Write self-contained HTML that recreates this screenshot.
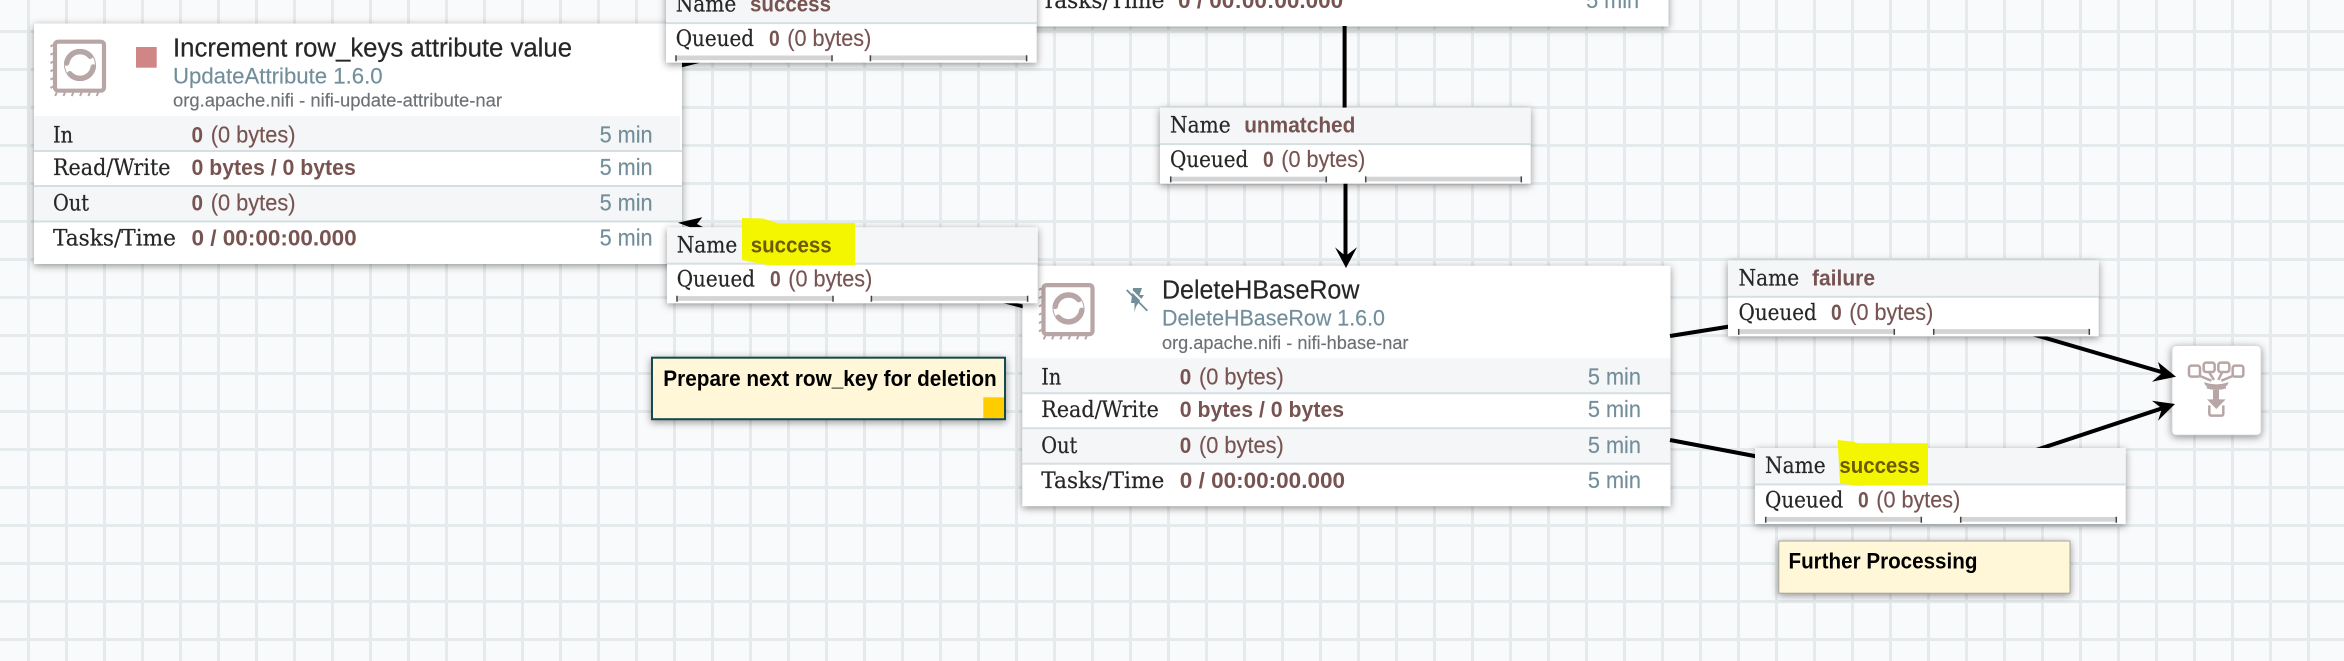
<!DOCTYPE html>
<html lang="en">
<head>
<meta charset="utf-8">
<title>NiFi flow</title>
<style>
html,body{margin:0;padding:0;background:#f9fafb;width:2344px;height:661px;overflow:hidden}
svg{display:block}
.sh{filter:drop-shadow(0 2px 4px rgba(0,0,0,.42))}
text{white-space:pre}
.t{font:25.5px "Liberation Sans",sans-serif;fill:#262626;stroke:#262626;stroke-width:.2}
.s{font:22px "Liberation Sans",sans-serif;fill:#728e9b;stroke:#728e9b;stroke-width:.15}
.b{font:18.5px "Liberation Sans",sans-serif;fill:#6b7175;stroke:#6b7175;stroke-width:.15}
.l{font:22px "DejaVu Serif","Liberation Serif",serif;fill:#262626;stroke:#262626;stroke-width:.2}
.v{font:bold 22.5px "Liberation Sans",sans-serif;fill:#775351}
.n{font:23px "Liberation Sans",sans-serif;fill:#775351;stroke:#775351;stroke-width:.15}
.m{font:23px "Liberation Sans",sans-serif;fill:#728e9b;stroke:#728e9b;stroke-width:.15}
.o{font:bold 22px "Liberation Sans",sans-serif;fill:#000}
.hl{font:bold 22.5px "Liberation Sans",sans-serif;fill:#6e5a00}
.ic{fill:none;stroke:#b8a5a5}
</style>
</head>
<body>
<svg xmlns="http://www.w3.org/2000/svg" width="2344" height="661" viewBox="0 0 2344 661">
<defs>
<pattern id="g" x="27" y="30" width="38" height="38" patternUnits="userSpaceOnUse">
<rect width="38" height="38" fill="#f9fafb"/>
<rect width="3" height="38" fill="#e5ebed"/>
<rect width="38" height="3" fill="#e5ebed"/>
</pattern>
</defs>
<rect width="2344" height="661" fill="url(#g)"/>

<!-- top processor (cropped) -->
<g transform="translate(1020.5,-214)">
<rect class="sh" width="648" height="240.5" fill="#fff"/>
<text class="l" x="21" y="222.2" textLength="123" lengthAdjust="spacingAndGlyphs">Tasks/Time</text>
<text class="v" x="157.5" y="222.2" textLength="165.2" lengthAdjust="spacingAndGlyphs">0 / 00:00:00.000</text>
<text class="m" x="565.6" y="222.2" textLength="53" lengthAdjust="spacingAndGlyphs">5 min</text>
</g>

<!-- processor 1 -->
<g transform="translate(34,23.5)">
<rect class="sh" width="648" height="240.5" fill="#fff"/>
<rect y="92.5" width="646" height="34" fill="#f4f6f7"/>
<rect y="126.5" width="648" height="2" fill="#d5dfe2"/>
<rect y="163.5" width="648" height="33.5" fill="#f4f6f7"/>
<rect y="161.5" width="648" height="2" fill="#d5dfe2"/>
<rect y="197" width="648" height="2" fill="#d5dfe2"/>
<rect class="ic" x="21" y="18.2" width="49" height="49" rx="3" stroke-width="4.2"/>
<path class="ic" stroke-width="2" d="M19 21.5l-2.5 1.5M19 29.8l-2.5 1.5M19 38.1l-2.5 1.5M19 46.4l-2.5 1.5M19 54.7l-2.5 1.5M19 63l-2.5 1.5M22.7 69l-1.5 3.5M31 69l-1.5 3.5M39.3 69l-1.5 3.5M47.6 69l-1.5 3.5M55.9 69l-1.5 3.5M64.2 69l-1.5 3.5"/>
<circle class="ic" cx="46" cy="41.5" r="15.5" stroke-width="1" stroke="#cdbfbf"/>
<path class="ic" stroke-width="5.5" stroke-linecap="round" d="M32.7 39.5A13.5 13.5 0 0 1 56.2 32.7M35.8 50.3A13.5 13.5 0 0 0 59.3 43.5"/>
<rect x="102" y="23.5" width="20.7" height="20.7" fill="#d18686"/>
<text class="t" x="139" y="33.2" textLength="399" lengthAdjust="spacingAndGlyphs">Increment row_keys attribute value</text>
<text class="s" x="139" y="59.8" textLength="209.6" lengthAdjust="spacingAndGlyphs">UpdateAttribute 1.6.0</text>
<text class="b" x="139" y="83.2" textLength="329" lengthAdjust="spacingAndGlyphs">org.apache.nifi - nifi-update-attribute-nar</text>
<text class="l" x="19" y="118.8" textLength="20" lengthAdjust="spacingAndGlyphs">In</text>
<text class="v" x="157.5" y="118.8" textLength="11.5" lengthAdjust="spacingAndGlyphs">0</text>
<text class="n" x="176.7" y="118.8" textLength="84.8" lengthAdjust="spacingAndGlyphs">(0 bytes)</text>
<text class="m" x="565.6" y="118.8" textLength="53" lengthAdjust="spacingAndGlyphs">5 min</text>
<text class="l" x="19" y="151.5" textLength="117.5" lengthAdjust="spacingAndGlyphs">Read/Write</text>
<text class="v" x="157.5" y="151.5" textLength="164.3" lengthAdjust="spacingAndGlyphs">0 bytes / 0 bytes</text>
<text class="m" x="565.6" y="151.5" textLength="53" lengthAdjust="spacingAndGlyphs">5 min</text>
<text class="l" x="19" y="187.2" textLength="36" lengthAdjust="spacingAndGlyphs">Out</text>
<text class="v" x="157.5" y="187.2" textLength="11.5" lengthAdjust="spacingAndGlyphs">0</text>
<text class="n" x="176.7" y="187.2" textLength="84.8" lengthAdjust="spacingAndGlyphs">(0 bytes)</text>
<text class="m" x="565.6" y="187.2" textLength="53" lengthAdjust="spacingAndGlyphs">5 min</text>
<text class="l" x="19" y="222.2" textLength="123" lengthAdjust="spacingAndGlyphs">Tasks/Time</text>
<text class="v" x="157.5" y="222.2" textLength="165.2" lengthAdjust="spacingAndGlyphs">0 / 00:00:00.000</text>
<text class="m" x="565.6" y="222.2" textLength="53" lengthAdjust="spacingAndGlyphs">5 min</text>
</g>

<!-- processor 2 -->
<g transform="translate(1022.3,265.7)">
<rect class="sh" width="648.2" height="240.5" fill="#fff"/>
<rect y="92.5" width="648" height="34" fill="#f4f6f7"/>
<rect y="126.5" width="648" height="2" fill="#d5dfe2"/>
<rect y="163.5" width="648" height="33.5" fill="#f4f6f7"/>
<rect y="161.5" width="648" height="2" fill="#d5dfe2"/>
<rect y="197" width="648" height="2" fill="#d5dfe2"/>
<rect class="ic" x="21.2" y="19.4" width="49" height="49" rx="3" stroke-width="4.2"/>
<path class="ic" stroke-width="2" d="M19.2 22.7l-2.5 1.5M19.2 31l-2.5 1.5M19.2 39.3l-2.5 1.5M19.2 47.6l-2.5 1.5M19.2 55.9l-2.5 1.5M19.2 64.2l-2.5 1.5M22.9 70.2l-1.5 3.5M31.2 70.2l-1.5 3.5M39.5 70.2l-1.5 3.5M47.8 70.2l-1.5 3.5M56.1 70.2l-1.5 3.5M64.4 70.2l-1.5 3.5"/>
<circle class="ic" cx="46.2" cy="42.7" r="15.5" stroke-width="1" stroke="#cdbfbf"/>
<path class="ic" stroke-width="5.5" stroke-linecap="round" d="M32.9 40.7A13.5 13.5 0 0 1 56.4 33.9M36 51.5A13.5 13.5 0 0 0 59.5 44.7"/>
<text class="t" x="139.7" y="33" textLength="197.4" lengthAdjust="spacingAndGlyphs">DeleteHBaseRow</text>
<text class="s" x="139.7" y="59.8" textLength="223" lengthAdjust="spacingAndGlyphs">DeleteHBaseRow 1.6.0</text>
<text class="b" x="139.7" y="83.2" textLength="246.5" lengthAdjust="spacingAndGlyphs">org.apache.nifi - nifi-hbase-nar</text>
<text class="l" x="19" y="118.8" textLength="20" lengthAdjust="spacingAndGlyphs">In</text>
<text class="v" x="157.5" y="118.8" textLength="11.5" lengthAdjust="spacingAndGlyphs">0</text>
<text class="n" x="176.7" y="118.8" textLength="84.8" lengthAdjust="spacingAndGlyphs">(0 bytes)</text>
<text class="m" x="565.6" y="118.8" textLength="53" lengthAdjust="spacingAndGlyphs">5 min</text>
<text class="l" x="19" y="151.5" textLength="117.5" lengthAdjust="spacingAndGlyphs">Read/Write</text>
<text class="v" x="157.5" y="151.5" textLength="164.3" lengthAdjust="spacingAndGlyphs">0 bytes / 0 bytes</text>
<text class="m" x="565.6" y="151.5" textLength="53" lengthAdjust="spacingAndGlyphs">5 min</text>
<text class="l" x="19" y="187.2" textLength="36" lengthAdjust="spacingAndGlyphs">Out</text>
<text class="v" x="157.5" y="187.2" textLength="11.5" lengthAdjust="spacingAndGlyphs">0</text>
<text class="n" x="176.7" y="187.2" textLength="84.8" lengthAdjust="spacingAndGlyphs">(0 bytes)</text>
<text class="m" x="565.6" y="187.2" textLength="53" lengthAdjust="spacingAndGlyphs">5 min</text>
<text class="l" x="19" y="222.2" textLength="123" lengthAdjust="spacingAndGlyphs">Tasks/Time</text>
<text class="v" x="157.5" y="222.2" textLength="165.2" lengthAdjust="spacingAndGlyphs">0 / 00:00:00.000</text>
<text class="m" x="565.6" y="222.2" textLength="53" lengthAdjust="spacingAndGlyphs">5 min</text>
</g>
<!-- disabled bolt icon -->
<path d="M1133 288h9l-2.5 7h4.5l-8 11.500-1.500 5.500 0-9-3.500 0z" fill="#728e9b"/>
<path d="M1129.5 288.500L1149.500 308.500" stroke="#fff" stroke-width="2"/>
<path d="M1126.7 290L1147.3 310.7" stroke="#728e9b" stroke-width="1.8"/>

<!-- funnel -->
<rect class="sh" x="2172" y="345.5" width="89" height="89.5" rx="4" fill="#fff" stroke="#d4d4d4" stroke-width=".8"/>
<g transform="translate(2150,330) scale(.3333)">
<g fill="none" stroke="#b8a5a5" stroke-width="7.5">
<rect x="117" y="107" width="33" height="33" rx="7"/>
<rect x="161" y="98" width="33" height="28" rx="7"/>
<rect x="205" y="98" width="33" height="28" rx="7"/>
<rect x="248" y="107" width="32" height="33" rx="7"/>
<path d="M150 138L184 152M177 126L192 150M217 126L205 150M248 138L214 152"/>
<path d="M178 226v24q0 7 7 7h28q7 0 7-7v-24"/>
</g>
<path d="M162 156q37 14 74 0l-4 10q-33 14-66 0z" fill="#b8a5a5"/>
<path d="M170 168q29 10 58 0v7q-29 10-58 0z" fill="#b8a5a5"/>
<path d="M189 180h18v28h20l-28 29-28-29h18z" fill="#b8a5a5"/>
</g>

<!-- connections -->
<g fill="none" stroke="#000" stroke-width="4">
<path d="M1344.6 26V108"/>
<path d="M1345.5 183V258"/>
<path d="M1670 336L1735 325.600"/>
<path d="M2025 332L2165 373"/>
<path d="M1670 440L1765 458"/>
<path d="M2030 452L2163 408"/>
</g>
<g fill="#000">
<polygon points="1346,268 1335,247.3 1345.5,256 1357,247.3"/>
<polygon points="2176,376.7 2158,362 2161.5,373.5 2152,381.7"/>
<polygon points="2175,404 2152,400.7 2162,408.5 2158,420.7"/>
<polygon points="682,62.7 700,62.7 682,67.3"/>
<polygon points="678,222.7 702.3,217.3 697,224 703.3,227.3 690,227.3"/>
<polygon points="1001.7,302.7 1015,302.7 1022.7,304.5 1022.7,308.3"/>
</g>

<!-- label: success (top) -->
<g transform="translate(666,-13.3)">
<rect class="sh" width="370.7" height="76" fill="#fff"/>
<rect width="370.7" height="35.4" fill="#f4f6f7"/>
<rect y="35.4" width="370.7" height="2" fill="#d5dfe2"/>
<text class="l" x="9.7" y="25" textLength="60.6" lengthAdjust="spacingAndGlyphs">Name</text>
<text class="v" x="84" y="25" textLength="81" lengthAdjust="spacingAndGlyphs">success</text>
<text class="l" x="9.7" y="59.4" textLength="78.3" lengthAdjust="spacingAndGlyphs">Queued</text>
<text class="v" x="103" y="59.4" textLength="10.7" lengthAdjust="spacingAndGlyphs">0</text>
<text class="n" x="121.3" y="59.4" textLength="84" lengthAdjust="spacingAndGlyphs">(0 bytes)</text>
<rect x="9.3" y="68.8" width="157.4" height="4.7" fill="#d4d4d4"/><rect x="203.7" y="68.8" width="157.6" height="4.7" fill="#d4d4d4"/>
<path d="M10 68.5v6M166 68.5v6M204.4 68.5v6M360.6 68.5v6" stroke="#444" stroke-width="1.5"/>
</g>

<!-- label: success (highlighted) -->
<g transform="translate(667,227.3)">
<rect class="sh" width="370.7" height="76" fill="#fff"/>
<rect width="370.7" height="35.4" fill="#f4f6f7"/>
<rect y="35.4" width="370.7" height="2" fill="#d5dfe2"/>
</g>
<polygon points="742,218 763,218.5 778,223.3 855,223 855,265 767,265 742,260" fill="#f4f600"/>
<g transform="translate(667,227.3)">
<text class="l" x="9.7" y="25" textLength="60.6" lengthAdjust="spacingAndGlyphs">Name</text>
<text class="hl" x="83.7" y="25" textLength="81" lengthAdjust="spacingAndGlyphs">success</text>
<text class="l" x="9.7" y="59.4" textLength="78.3" lengthAdjust="spacingAndGlyphs">Queued</text>
<text class="v" x="103" y="59.4" textLength="10.7" lengthAdjust="spacingAndGlyphs">0</text>
<text class="n" x="121.3" y="59.4" textLength="84" lengthAdjust="spacingAndGlyphs">(0 bytes)</text>
<rect x="9.3" y="68.8" width="157.4" height="4.7" fill="#d4d4d4"/><rect x="203.7" y="68.8" width="157.6" height="4.7" fill="#d4d4d4"/>
<path d="M10 68.5v6M166 68.5v6M204.4 68.5v6M360.6 68.5v6" stroke="#444" stroke-width="1.5"/>
</g>

<!-- label: unmatched -->
<g transform="translate(1160,107.7)">
<rect class="sh" width="370.7" height="76" fill="#fff"/>
<rect width="370.7" height="35.4" fill="#f4f6f7"/>
<rect y="35.4" width="370.7" height="2" fill="#d5dfe2"/>
<text class="l" x="10" y="25" textLength="60.6" lengthAdjust="spacingAndGlyphs">Name</text>
<text class="v" x="84.2" y="25" textLength="111.2" lengthAdjust="spacingAndGlyphs">unmatched</text>
<text class="l" x="10" y="59.4" textLength="78.3" lengthAdjust="spacingAndGlyphs">Queued</text>
<text class="v" x="103" y="59.4" textLength="10.7" lengthAdjust="spacingAndGlyphs">0</text>
<text class="n" x="121.3" y="59.4" textLength="84" lengthAdjust="spacingAndGlyphs">(0 bytes)</text>
<rect x="10" y="69" width="157" height="4.7" fill="#d4d4d4"/><rect x="205" y="69" width="157" height="4.7" fill="#d4d4d4"/>
<path d="M10.7 68.7v6M166.3 68.7v6M205.7 68.7v6M361.3 68.7v6" stroke="#444" stroke-width="1.5"/>
</g>

<!-- label: failure -->
<g transform="translate(1728,260.4)">
<rect class="sh" width="370.7" height="76" fill="#fff"/>
<rect width="370.7" height="35.4" fill="#f4f6f7"/>
<rect y="35.4" width="370.7" height="2" fill="#d5dfe2"/>
<text class="l" x="10.5" y="25" textLength="60.6" lengthAdjust="spacingAndGlyphs">Name</text>
<text class="v" x="84" y="25" textLength="63" lengthAdjust="spacingAndGlyphs">failure</text>
<text class="l" x="10.5" y="59.4" textLength="78.3" lengthAdjust="spacingAndGlyphs">Queued</text>
<text class="v" x="103" y="59.4" textLength="10.7" lengthAdjust="spacingAndGlyphs">0</text>
<text class="n" x="121.3" y="59.4" textLength="84" lengthAdjust="spacingAndGlyphs">(0 bytes)</text>
<rect x="10" y="68.8" width="157" height="4.7" fill="#d4d4d4"/><rect x="205" y="68.8" width="157" height="4.7" fill="#d4d4d4"/>
<path d="M10.7 68.5v6M166.3 68.5v6M205.7 68.5v6M361.3 68.5v6" stroke="#444" stroke-width="1.5"/>
</g>

<!-- label: success (right, highlighted) -->
<g transform="translate(1755,448)">
<rect class="sh" width="370.7" height="76" fill="#fff"/>
<rect width="370.7" height="35.4" fill="#f4f6f7"/>
<rect y="35.4" width="370.7" height="2" fill="#d5dfe2"/>
</g>
<polygon points="1837.6,440 1853.5,441.7 1858,443.3 1928,443.3 1928,485 1855.8,485.7 1840,483.3" fill="#f4f600"/>
<g transform="translate(1755,448)">
<text class="l" x="10" y="25" textLength="60.6" lengthAdjust="spacingAndGlyphs">Name</text>
<text class="hl" x="84.4" y="25" textLength="80.6" lengthAdjust="spacingAndGlyphs">success</text>
<text class="l" x="10" y="59.4" textLength="78.3" lengthAdjust="spacingAndGlyphs">Queued</text>
<text class="v" x="103" y="59.4" textLength="10.7" lengthAdjust="spacingAndGlyphs">0</text>
<text class="n" x="121.3" y="59.4" textLength="84" lengthAdjust="spacingAndGlyphs">(0 bytes)</text>
<rect x="10" y="69" width="157" height="4.7" fill="#d4d4d4"/><rect x="205" y="69" width="157" height="4.7" fill="#d4d4d4"/>
<path d="M10.7 68.7v6M166.3 68.7v6M205.7 68.7v6M361.3 68.7v6" stroke="#444" stroke-width="1.5"/>
</g>

<!-- notes -->
<rect class="sh" x="652" y="357.7" width="353" height="61.5" fill="#fff7d7" stroke="#17484c" stroke-width="2"/>
<rect x="983.3" y="397.3" width="20.7" height="20.7" fill="#ffcc00"/>
<text class="o" x="663.3" y="386" textLength="333.4" lengthAdjust="spacingAndGlyphs">Prepare next row_key for deletion</text>

<rect class="sh" x="1778.8" y="541" width="291.2" height="52.2" fill="#fff7d7" stroke="#aaa69a" stroke-width="1"/>
<text class="o" x="1788.5" y="568.3" textLength="188.9" lengthAdjust="spacingAndGlyphs">Further Processing</text>
</svg>
</body>
</html>
